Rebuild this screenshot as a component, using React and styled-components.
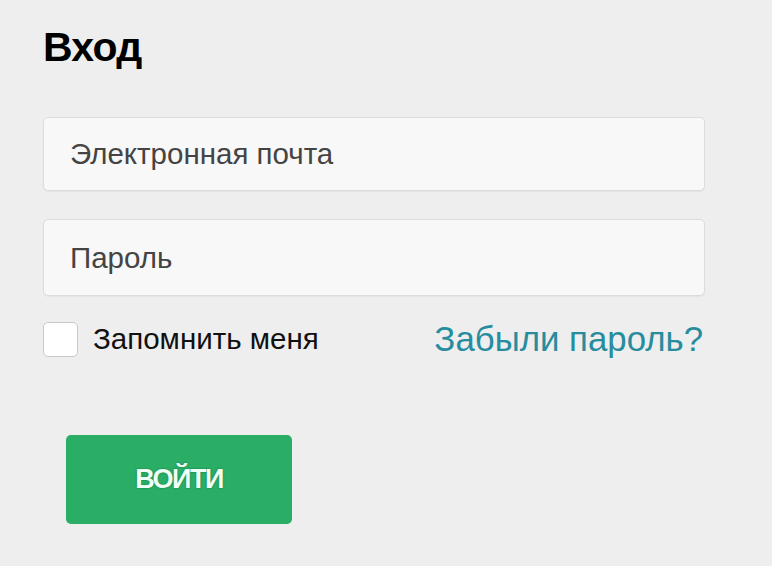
import React from "react";
import styled, { createGlobalStyle } from "styled-components";

const GlobalStyle = createGlobalStyle`
  html, body {
    margin: 0;
    padding: 0;
    background: #efeeee;
  }
  body {
    font-family: "Liberation Sans", Arial, sans-serif;
  }
`;

const Page = styled.div`
  width: 772px;
  height: 566px;
  box-sizing: border-box;
  padding: 23px 67px 0 43px;
  background: #efeeee;
`;

const Title = styled.h1`
  margin: 0 0 46px;
  font-size: 41px;
  font-weight: 700;
  line-height: 48px;
  letter-spacing: -0.7px;
  color: #000;
`;

const Form = styled.form`
  display: flex;
  flex-direction: column;
`;

const Field = styled.input`
  box-sizing: border-box;
  height: ${(p) => p.$h}px;
  margin-bottom: ${(p) => p.$mb}px;
  padding: 0 26px;
  border: 1px solid #dcdcdc;
  border-radius: 5px;
  background: #f8f8f8;
  box-shadow: 0 1px 1px rgba(0, 0, 0, 0.04);
  font-family: "Liberation Sans", Arial, sans-serif;
  font-size: 29.5px;
  color: #333;
  outline: none;

  &::placeholder {
    color: #444;
  }
`;

const OptionsRow = styled.div`
  display: flex;
  align-items: center;
  justify-content: space-between;
  height: 36px;
`;

const Remember = styled.label`
  display: flex;
  align-items: center;
  gap: 15px;
  font-size: 29.5px;
  color: #111;
`;

const Box = styled.span`
  box-sizing: border-box;
  width: 35px;
  height: 35px;
  border: 1px solid #c9c9c9;
  border-radius: 5px;
  background: #fff;
`;

const Forgot = styled.a`
  font-size: 34.8px;
  color: #278d9e;
  text-decoration: none;
  margin-right: 2px;
`;

const Submit = styled.button`
  align-self: flex-start;
  margin: 78px 0 0 23px;
  width: 226px;
  height: 89px;
  border: none;
  border-radius: 5px;
  background: #2aae66;
  color: #eefff5;
  font-family: "Liberation Sans", Arial, sans-serif;
  font-size: 27px;
  font-weight: 700;
  letter-spacing: -1.5px;
  text-shadow: 0 0 2px rgba(0, 60, 30, 0.55);
  cursor: pointer;
`;

const App = () => {
  return (
    <>
      <GlobalStyle />
      <Page>
        <Title>Вход</Title>
        <Form onSubmit={(e) => e.preventDefault()}>
          <Field $h={74} $mb={28} type="email" placeholder="Электронная почта" />
          <Field $h={77} $mb={25} type="password" placeholder="Пароль" />
          <OptionsRow>
            <Remember>
              <Box />
              Запомнить меня
            </Remember>
            <Forgot href="#">Забыли пароль?</Forgot>
          </OptionsRow>
          <Submit type="submit">ВОЙТИ</Submit>
        </Form>
      </Page>
    </>
  );
};

export default App;
